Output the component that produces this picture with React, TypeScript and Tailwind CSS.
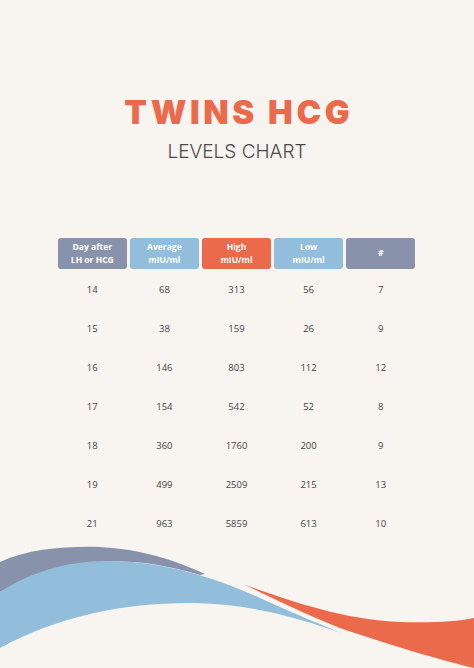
const headers = [
  { lines: ["Day after", "LH or HCG"], bg: "bg-[#8893ab]" },
  { lines: ["Average", "mIU/ml"], bg: "bg-[#92bedb]" },
  { lines: ["High", "mIU/ml"], bg: "bg-[#ec6a4c]" },
  { lines: ["Low", "mIU/ml"], bg: "bg-[#92bedb]" },
  { lines: ["#"], bg: "bg-[#8893ab]" },
]

const rows = [
  ["14", "68", "313", "56", "7"],
  ["15", "38", "159", "26", "9"],
  ["16", "146", "803", "112", "12"],
  ["17", "154", "542", "52", "8"],
  ["18", "360", "1760", "200", "9"],
  ["19", "499", "2509", "215", "13"],
  ["21", "963", "5859", "613", "10"],
]

export default function App() {
  return (
    <div className="relative w-[474px] h-[668px] overflow-hidden bg-[#f8f4f0] font-['Open_Sans',sans-serif]">
      {/* Title */}
      <div className="pt-[96px] flex flex-col items-center">
        <h1 className="text-[33px] leading-[32px] font-black tracking-[0.11em] pl-[0.11em] text-[#ec6a4c] font-['Inter',sans-serif]">
          TWINS HCG
        </h1>
        <h2 className="mt-[14px] text-[19px] leading-[20px] text-[#4a4a4a] font-['Inter',sans-serif] font-light">
          LEVELS CHART
        </h2>
      </div>

      {/* Table */}
      <div className="mt-[76px] ml-[58px] w-[357px]">
        <div className="grid grid-cols-5 gap-x-[3.5px]">
          {headers.map((h, i) => (
            <div
              key={i}
              className={`${h.bg} h-[31px] rounded-[3px] flex flex-col items-center justify-center text-white text-[8.5px] leading-[12.5px] font-bold`}
            >
              {h.lines.map((l) => (
                <span key={l}>{l}</span>
              ))}
            </div>
          ))}
        </div>
        <div className="pt-[2px]">
          {rows.map((r, i) => (
            <div key={i} className="grid grid-cols-5 gap-x-[3.5px] h-[39px] items-center">
              {r.map((v, j) => (
                <div key={j} className="text-center text-[9.5px] text-[#444]">
                  {v}
                </div>
              ))}
            </div>
          ))}
        </div>
      </div>

      {/* Bottom waves */}
      <svg className="absolute left-0 bottom-0" width="474" height="130" viewBox="0 538 474 130">
        <path
          d="M0 562 C 30 548, 70 546, 100 547 C 140 549, 175 560, 205 574 L 200 575 C 150 560, 110 558, 80 566 C 50 572, 20 582, 0 592 Z"
          fill="#8893ab"
        />
        <path
          d="M0 592 C 30 572, 70 560, 110 561 C 170 562, 220 580, 260 598 C 295 614, 320 624, 341 633 C 300 618, 250 604, 195 603 C 130 602, 60 615, 0 648 Z"
          fill="#92bedb"
        />
        <path
          d="M243 584 C 300 605, 350 620, 400 622 C 430 623, 455 622, 474 618 L 474 668 C 440 660, 390 645, 340 628 C 300 612, 270 597, 243 584 Z"
          fill="#ec6a4c"
        />
      </svg>
    </div>
  )
}
